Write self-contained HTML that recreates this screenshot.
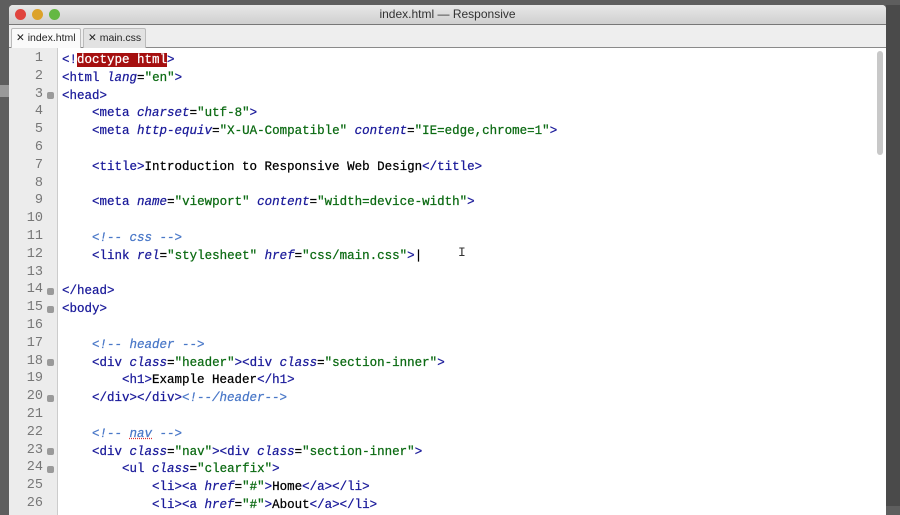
<!DOCTYPE html>
<html><head><style>
body{margin:0;width:900px;height:506px;background:#5e5e5e;overflow:hidden;position:relative;font-family:"Liberation Sans",sans-serif}
.win{position:absolute;left:9px;top:5px;width:877px;height:510px;background:#fff;border-radius:4px 4px 0 0;overflow:hidden}
.title{height:19px;background:linear-gradient(#e8e8e8,#cfcfcf);border-bottom:1px solid #777;text-align:center;font-size:12px;color:#333;line-height:19px}
.dot{position:absolute;top:4px;width:11px;height:11px;border-radius:50%}
.tabs{position:absolute;top:20px;left:0;right:0;height:22px;background:#eeeeee;border-bottom:1px solid #8a8a8a}
.tab{position:absolute;top:3px;height:19px;border:1px solid #bbb;border-bottom:none;font-size:10.5px;line-height:18px;padding:0 4px;color:#222;border-radius:2px 2px 0 0}
.gut{position:absolute;top:43px;left:0;width:48px;bottom:0;background:#ececec;border-right:1px solid #ccc}
.ln{position:absolute;left:0;width:34px;text-align:right;color:#777;font:13.5px "Liberation Mono",monospace}
.fold{position:absolute;left:38px;width:7px;height:7px;background:#9a9a9a;border-radius:2px}
.code{position:absolute;left:53px;font:12.5px/17.8px "Liberation Mono",monospace;color:#000;white-space:pre;-webkit-text-stroke:0.25px}
.t{color:#1a1a9a}.a{color:#1a1a9a;font-style:italic}.s{color:#0b6a12}.c{color:#4a78c8;font-style:italic}
.sb{position:absolute;right:3px;top:46px;width:6px;height:104px;background:#c8c8c8;border-radius:3px}
</style></head><body>
<div style="position:absolute;left:0;top:85px;width:9px;height:12px;background:#999"></div>
<div class="win">
<div class="title">index.html — Responsive</div>
<div class="dot" style="left:6px;background:#e0443e"></div>
<div class="dot" style="left:23px;background:#dca22a"></div>
<div class="dot" style="left:40px;background:#65b843"></div>
<div class="tabs">
<div class="tab" style="left:2px;background:#fafafa;">✕ index.html</div>
<div class="tab" style="left:74px;background:#e2e2e2;">✕ main.css</div>
</div>
<div class="gut"></div>
<div class="sb"></div>
<div style="position:absolute;left:0;top:46px;">
<div class="ln" style="top:0">1</div>
<div class="ln" style="top:17.8px">2</div>
<div class="ln" style="top:35.6px">3</div><div class="fold" style="top:41px"></div>
<div class="ln" style="top:53.4px">4</div>
<div class="ln" style="top:71.2px">5</div>
<div class="ln" style="top:89px">6</div>
<div class="ln" style="top:106.8px">7</div>
<div class="ln" style="top:124.6px">8</div>
<div class="ln" style="top:142.4px">9</div>
<div class="ln" style="top:160.2px">10</div>
<div class="ln" style="top:178px">11</div>
<div class="ln" style="top:195.8px">12</div>
<div class="ln" style="top:213.6px">13</div>
<div class="ln" style="top:231.4px">14</div><div class="fold" style="top:237px"></div>
<div class="ln" style="top:249.2px">15</div><div class="fold" style="top:255px"></div>
<div class="ln" style="top:267px">16</div>
<div class="ln" style="top:284.8px">17</div>
<div class="ln" style="top:302.6px">18</div><div class="fold" style="top:308px"></div>
<div class="ln" style="top:320.4px">19</div>
<div class="ln" style="top:338.2px">20</div><div class="fold" style="top:344px"></div>
<div class="ln" style="top:356px">21</div>
<div class="ln" style="top:373.8px">22</div>
<div class="ln" style="top:391.6px">23</div><div class="fold" style="top:397px"></div>
<div class="ln" style="top:409.4px">24</div><div class="fold" style="top:415px"></div>
<div class="ln" style="top:427.2px">25</div>
<div class="ln" style="top:445px">26</div>
</div>
<div class="code" style="top:47px"><span class="t">&lt;!</span><span style="background:#a50f0f;color:#fff">doctype html</span><span class="t">&gt;</span>
<span class="t">&lt;html</span> <span class="a">lang</span>=<span class="s">"en"</span><span class="t">&gt;</span>
<span class="t">&lt;head&gt;</span>
    <span class="t">&lt;meta</span> <span class="a">charset</span>=<span class="s">"utf-8"</span><span class="t">&gt;</span>
    <span class="t">&lt;meta</span> <span class="a">http-equiv</span>=<span class="s">"X-UA-Compatible"</span> <span class="a">content</span>=<span class="s">"IE=edge,chrome=1"</span><span class="t">&gt;</span>

    <span class="t">&lt;title&gt;</span>Introduction to Responsive Web Design<span class="t">&lt;/title&gt;</span>

    <span class="t">&lt;meta</span> <span class="a">name</span>=<span class="s">"viewport"</span> <span class="a">content</span>=<span class="s">"width=device-width"</span><span class="t">&gt;</span>

    <span class="c">&lt;!-- css --&gt;</span>
    <span class="t">&lt;link</span> <span class="a">rel</span>=<span class="s">"stylesheet"</span> <span class="a">href</span>=<span class="s">"css/main.css"</span><span class="t">&gt;</span>|

<span class="t">&lt;/head&gt;</span>
<span class="t">&lt;body&gt;</span>

    <span class="c">&lt;!-- header --&gt;</span>
    <span class="t">&lt;div</span> <span class="a">class</span>=<span class="s">"header"</span><span class="t">&gt;&lt;div</span> <span class="a">class</span>=<span class="s">"section-inner"</span><span class="t">&gt;</span>
        <span class="t">&lt;h1&gt;</span>Example Header<span class="t">&lt;/h1&gt;</span>
    <span class="t">&lt;/div&gt;&lt;/div&gt;</span><span class="c">&lt;!--/header--&gt;</span>

    <span class="c">&lt;!-- <u style="text-decoration-color:#d33;text-decoration-style:dotted">nav</u> --&gt;</span>
    <span class="t">&lt;div</span> <span class="a">class</span>=<span class="s">"nav"</span><span class="t">&gt;&lt;div</span> <span class="a">class</span>=<span class="s">"section-inner"</span><span class="t">&gt;</span>
        <span class="t">&lt;ul</span> <span class="a">class</span>=<span class="s">"clearfix"</span><span class="t">&gt;</span>
            <span class="t">&lt;li&gt;&lt;a</span> <span class="a">href</span>=<span class="s">"#"</span><span class="t">&gt;</span>Home<span class="t">&lt;/a&gt;&lt;/li&gt;</span>
            <span class="t">&lt;li&gt;&lt;a</span> <span class="a">href</span>=<span class="s">"#"</span><span class="t">&gt;</span>About<span class="t">&lt;/a&gt;&lt;/li&gt;</span></div>
<div style="position:absolute;left:449px;top:240px;font:13px 'Liberation Mono',monospace;color:#333">I</div>
</div>
<div style="position:absolute;left:886px;top:5px;width:14px;height:501px;background:#4a4a4a"></div>
</body></html>
